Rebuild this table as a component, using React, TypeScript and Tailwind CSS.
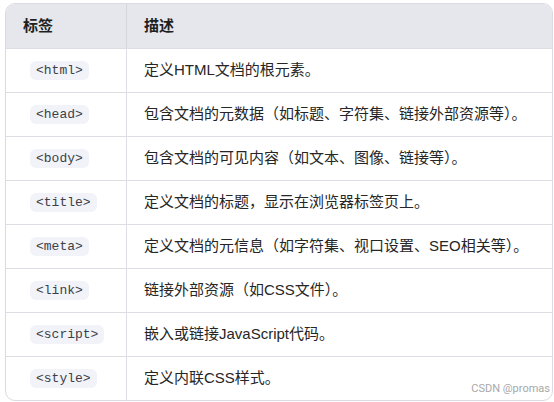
import React from "react";

const rows: [string, string][] = [
  ["<html>", "定义HTML文档的根元素。"],
  ["<head>", "包含文档的元数据（如标题、字符集、链接外部资源等）。"],
  ["<body>", "包含文档的可见内容（如文本、图像、链接等）。"],
  ["<title>", "定义文档的标题，显示在浏览器标签页上。"],
  ["<meta>", "定义文档的元信息（如字符集、视口设置、SEO相关等）。"],
  ["<link>", "链接外部资源（如CSS文件）。"],
  ["<script>", "嵌入或链接JavaScript代码。"],
  ["<style>", "定义内联CSS样式。"],
];

const sans = { fontFamily: '"Liberation Sans", "Noto Sans CJK SC", sans-serif' };

export default function App() {
  return (
    <div className="w-[554px] h-[402px] bg-white relative overflow-hidden" style={sans}>
      <div className="ml-[5px] mt-[3px] w-[548px] rounded-[10px] border border-[#d9dbe0] overflow-hidden">
        <div className="flex h-[44px] bg-[#e6e7ec] text-[15px] font-bold text-[#1f1f1f]">
          <div className="w-[121px] border-r border-[#d4d6dc] flex items-center pl-[17px]">标签</div>
          <div className="flex-1 flex items-center pl-[17px]">描述</div>
        </div>
        {rows.map(([tag, desc]) => (
          <div key={tag} className="flex h-[44px] border-t border-[#dcdee3] text-[15px] text-[#262626]">
            <div className="w-[121px] border-r border-[#dcdee3] flex items-center pl-[24px]">
              <span
                className="bg-[#f2f3f8] rounded-[6px] px-[6px] h-[19px] flex items-center text-[13px] text-[#3b3f4a]"
                style={{ fontFamily: '"Liberation Mono", "Courier New", monospace' }}
              >
                {tag}
              </span>
            </div>
            <div className="flex-1 flex items-center pl-[17px]">{desc}</div>
          </div>
        ))}
      </div>
      <div className="absolute right-[4px] bottom-[5px] text-[11px] text-[#a8a8a8]" style={{ fontFamily: '"Roboto", "Liberation Sans", sans-serif' }}>
        CSDN @promas
      </div>
    </div>
  );
}
